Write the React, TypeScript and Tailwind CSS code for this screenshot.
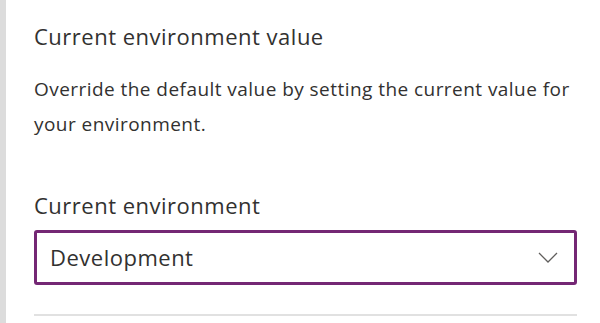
export default function App() {
  return (
    <div className="flex h-[323px] w-[600px] bg-white text-[#323130]" style={{ fontFamily: '"Open Sans", "Noto Sans", sans-serif' }}>
      <div className="w-[6px] shrink-0 bg-[#dcdcdc]" />
      <div className="flex w-[571px] flex-col pl-[28px] pt-[21px]">
        <h2 className="text-[22px] leading-[30px] tracking-[0.5px]">Current environment value</h2>
        <p className="mt-[21px] text-[19px] leading-[35px] tracking-[0.45px]">
          Override the default value by setting the current value for your environment.
        </p>
        <label className="mt-[49px] text-[22px] leading-[28px] tracking-[0.5px]">Current environment</label>
        <div className="mt-[11px] flex h-[55px] items-center justify-between rounded-[3px] border-[3px] border-[#742774] pl-[13px] pr-[16px]">
          <span className="text-[22px] tracking-[0.5px]">Development</span>
          <svg width="20" height="11" viewBox="0 0 20 11" fill="none" stroke="#605e5c" strokeWidth="1.3">
            <path d="M1 1 L10 10 L19 1" />
          </svg>
        </div>
        <div className="mt-[29px] h-[2px] bg-[#e1e1e1]" />
      </div>
    </div>
  );
}
